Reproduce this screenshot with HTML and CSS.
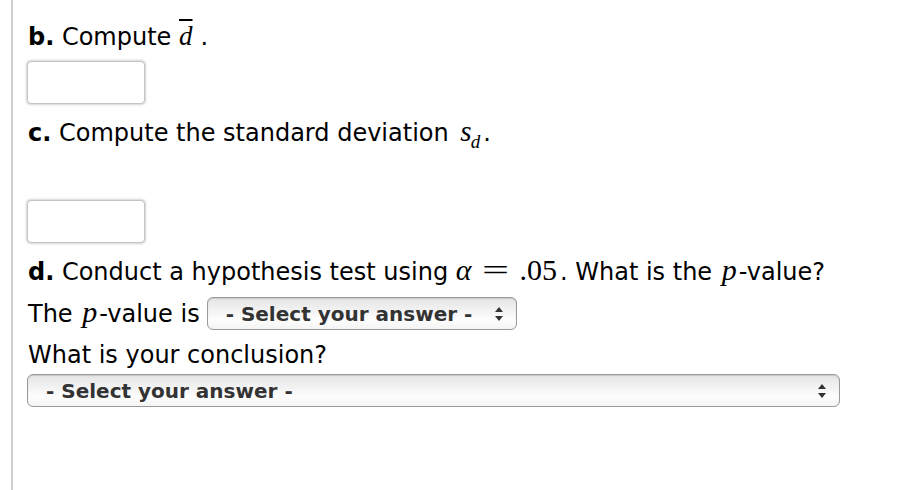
FILE: index.html
```html
<!DOCTYPE html>
<html lang="en">
<head>
  <meta charset="UTF-8">
  <meta name="viewport" content="width=device-width, initial-scale=1.0">
  <title>Paired differences</title>
  <link rel="stylesheet" href="styles.css">
</head>
<body>
  <div class="question">
    <p class="part part-b"><b>b.</b> Compute <span class="math"><i class="bar">d</i></span>.</p>
    <div class="answer-box"></div>

    <p class="part part-c"><b>c.</b> Compute the standard deviation <span class="math math-sd"><i>s</i><sub><i>d</i></sub></span>.</p>
    <div class="answer-box box-c"></div>

    <p class="part part-d"><b>d.</b> Conduct a hypothesis test using <span class="math math-lg"><i>α</i><span class="op">=</span>.05</span>. What is the <span class="math math-lg math-p"><i>p</i></span>-value?</p>

    <div class="row">
      <span>The <span class="math math-lg math-p"><i>p</i></span>-value is</span>
      <div class="select select-small">
        <span>- Select your answer -</span>
        <svg class="arrows" width="8" height="14" viewBox="0 0 8 14"><path d="M4 0 L8 5 L0 5 Z M4 14 L8 9 L0 9 Z" fill="#333"/></svg>
      </div>
    </div>

    <p class="part part-q">What is your conclusion?</p>
    <div class="select select-wide">
      <span>- Select your answer -</span>
      <svg class="arrows" width="8" height="14" viewBox="0 0 8 14"><path d="M4 0 L8 5 L0 5 Z M4 14 L8 9 L0 9 Z" fill="#333"/></svg>
    </div>
  </div>
</body>
</html>
```

FILE: styles.css
```css
body {
  margin: 0;
  padding: 0;
  background: #fff;
  color: #000;
  font-family: "DejaVu Sans", Verdana, sans-serif;
  font-size: 24px;
  line-height: 30px;
}
.question {
  margin-left: 11px;
  padding-left: 15px;
  border-left: 2px solid #cfcfcf;
  min-height: 490px;
  box-sizing: border-box;
  padding-top: 21px;
}
.part {
  margin: 0;
  height: 30px;
  white-space: nowrap;
}
.math {
  font-family: "Liberation Serif", "Times New Roman", serif;
  font-size: 27px;
}
.math-lg {
  font-size: 30px;
  line-height: 0;
  margin-right: 3px;
}
.math-p {
  margin: 0 2px;
}
.math-sd {
  font-size: 29px;
  margin: 0 3px 0 4px;
}
.math sub {
  font-size: 19px;
  line-height: 0;
  margin-left: -1px;
}
.op {
  display: inline-block;
  transform: scaleX(1.6);
  margin: 0 16px 0 15px;
}
.bar {
  text-decoration: overline;
  padding-right: 8px;
}
.answer-box {
  width: 116px;
  height: 41px;
  margin: 10px 0 0 -1px;
  border: 1px solid #c4c4c4;
  border-radius: 4px;
  box-shadow: 0 0 3px rgba(0, 0, 0, 0.35);
  background: #fff;
}
.part-c {
  margin-top: 12px;
}
.box-c {
  margin-top: 54px;
}
.part-d {
  margin-top: 14px;
}
.row {
  display: flex;
  align-items: center;
  gap: 7px;
  height: 33px;
  margin-top: 10px;
}
.part-q {
  margin-top: 10px;
}
.select {
  display: flex;
  align-items: center;
  justify-content: space-between;
  height: 33px;
  box-sizing: border-box;
  padding: 0 13px 0 18px;
  border: 1px solid #999;
  border-radius: 6px;
  background: linear-gradient(#e4e4e4, #fdfdfd 70%, #f4f4f4);
  box-shadow: inset 0 1px 1px rgba(0, 0, 0, 0.12);
  color: #333;
  font-weight: bold;
  font-size: 20px;
}
.select-small {
  width: 310px;
}
.select-wide {
  width: 813px;
  margin: 4px 0 0 -1px;
}
.arrows {
  display: block;
}
```
